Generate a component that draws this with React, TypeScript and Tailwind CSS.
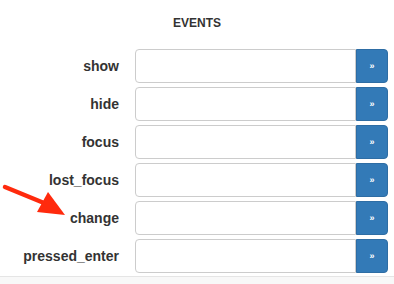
const EVENTS = ["show", "hide", "focus", "lost_focus", "change", "pressed_enter"];

function EventRow({ name }: { name: string }) {
  return (
    <div className="flex h-[34px] items-center">
      <label className="w-[119px] shrink-0 text-right text-[14px] font-bold text-[#333]">
        {name}
      </label>
      <div className="ml-[16px] flex h-full w-[253px]">
        <input
          type="text"
          className="h-full min-w-0 flex-1 rounded-l-[4px] border border-[#ccc] bg-white px-3 outline-none"
        />
        <button
          type="button"
          className="flex h-full w-[32px] items-center justify-center rounded-r-[4px] border border-[#2e6da4] bg-[#337ab7] text-[9px] font-bold leading-none text-white"
        >
          »
        </button>
      </div>
    </div>
  );
}

export default function App() {
  return (
    <div
      className="relative flex h-[284px] w-[394px] flex-col overflow-hidden bg-white"
      style={{ fontFamily: '"Liberation Sans", Arial, sans-serif' }}
    >
      <h3 className="pt-[15px] text-center text-[12px] font-bold leading-[16px] text-[#333]">
        EVENTS
      </h3>
      <div className="mt-[18px] flex flex-col gap-[4px]">
        {EVENTS.map((e) => (
          <EventRow key={e} name={e} />
        ))}
      </div>
      <div className="mt-[3px] flex-1 border-t border-[#e5e5e5] bg-[#f8f8f8]" />

      {/* annotation arrow pointing at "change" */}
      <svg
        className="pointer-events-none absolute left-0 top-0"
        width="394"
        height="284"
        viewBox="0 0 394 284"
      >
        <line x1="5" y1="187" x2="44" y2="203" stroke="#ff2a0d" strokeWidth="4.5" strokeLinecap="round" />
        <polygon points="48,192 37,212 65,215" fill="#ff2a0d" />
      </svg>
    </div>
  );
}
